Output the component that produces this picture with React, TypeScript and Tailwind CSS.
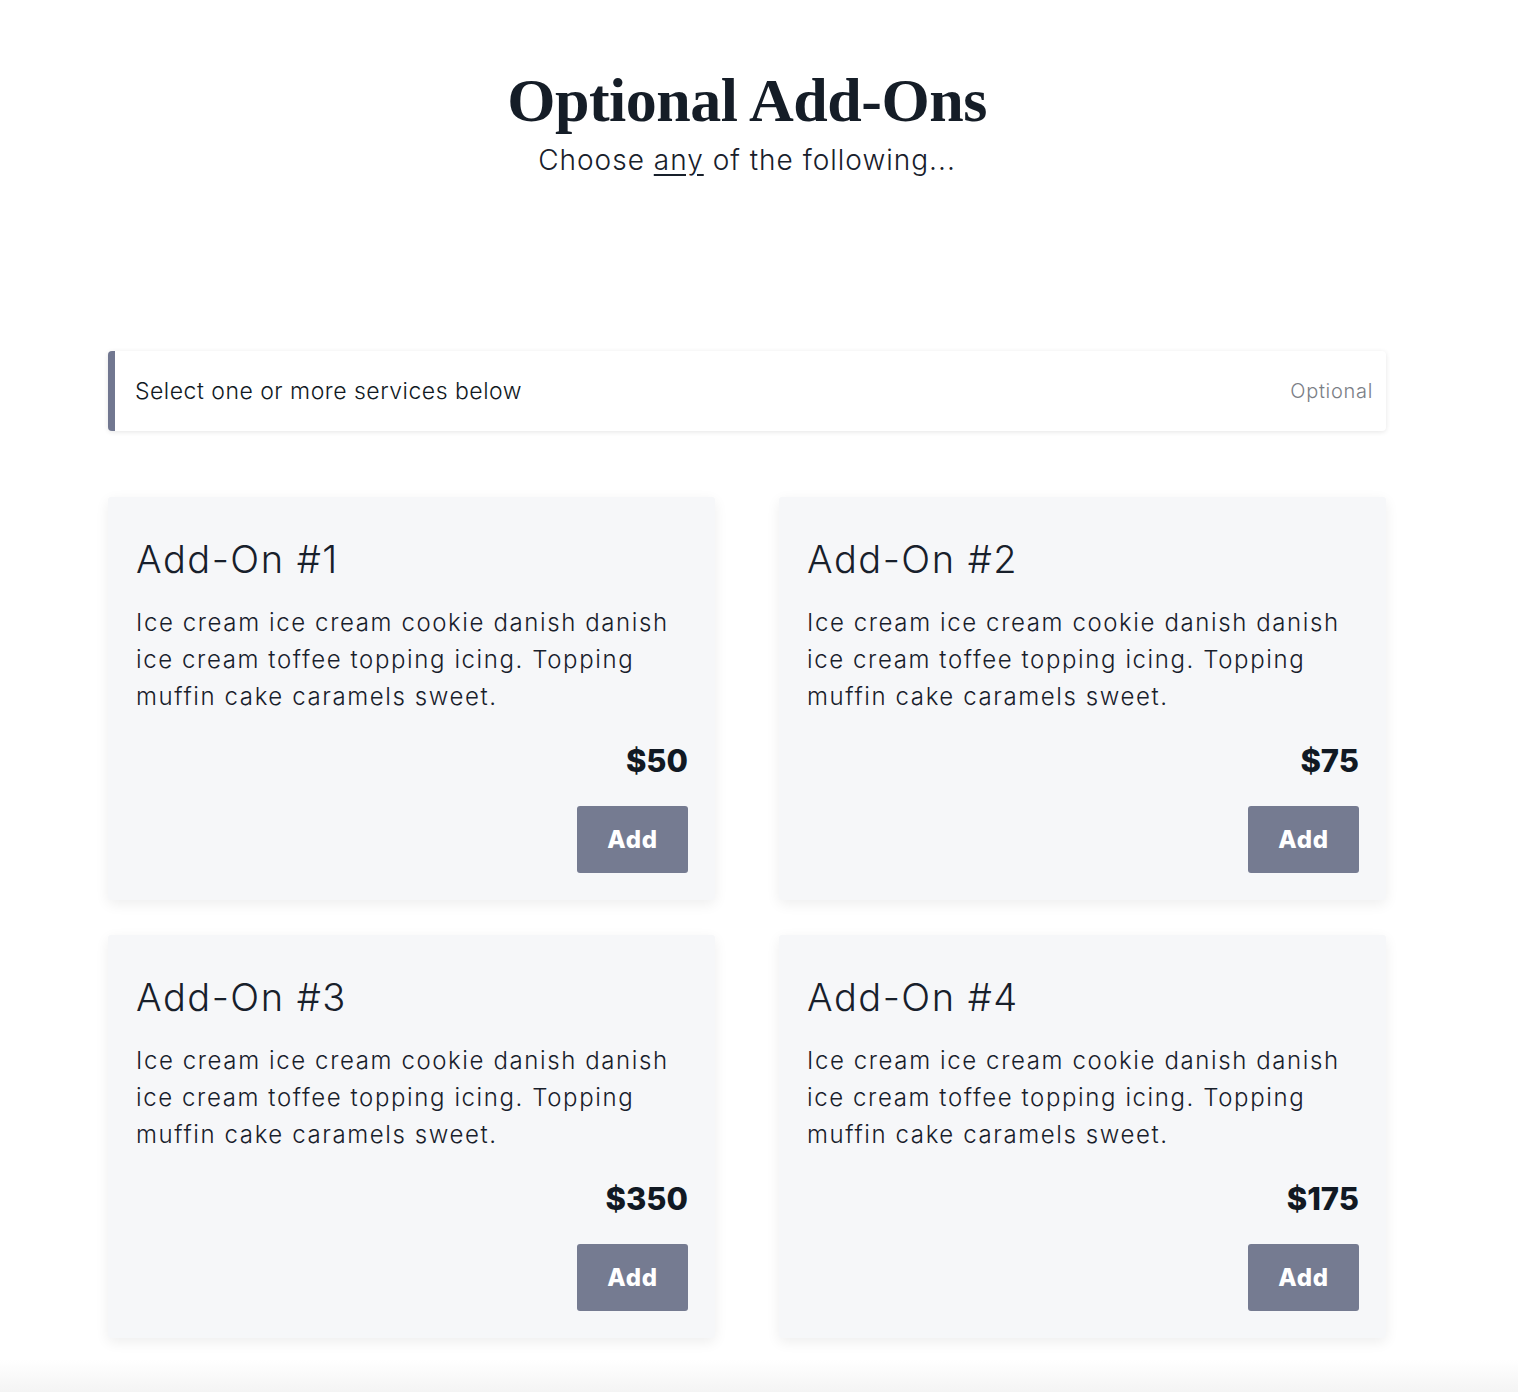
import React from 'react';

interface AddOn {
  id: number;
  price: string;
}

const addOns: AddOn[] = [
  { id: 1, price: '$50' },
  { id: 2, price: '$75' },
  { id: 3, price: '$350' },
  { id: 4, price: '$175' },
];

const blurb =
  'Ice cream ice cream cookie danish danish ice cream toffee topping icing. Topping muffin cake caramels sweet.';

const AddOnCard: React.FC<{ item: AddOn }> = ({ item }) => (
  <div className="flex flex-col rounded-[3px] bg-[#f6f7f9] pl-[28px] pr-[27px] pt-[38px] pb-[27px] shadow-[0_4px_14px_rgba(0,0,0,0.07)]">
    <h3 className="text-[38px] font-light leading-[48px] tracking-[1.5px] text-[#18202b]">Add-On #{item.id}</h3>
    <p className="mt-[21px] text-[24px] font-light leading-[37px] tracking-[1.6px] text-[#18202b]">{blurb}</p>
    <div className="mt-[24px] text-right text-[31px] font-extrabold leading-[44px] text-[#111923]">{item.price}</div>
    <div className="mt-[23px] flex justify-end">
      <button className="h-[67px] w-[111px] rounded-[3px] bg-[#757b91] text-[24px] font-extrabold tracking-[0.8px] text-white">
        Add
      </button>
    </div>
  </div>
);

const App: React.FC = () => {
  return (
    <div className="min-h-[1392px] bg-white font-['Inter','Noto_Sans',sans-serif] text-[#18202b]">
      <div className="w-[1494px]">
        <header className="flex flex-col items-center pt-[62px]">
          <h1 className="font-['Liberation_Serif',serif] text-[62px] font-bold leading-[76px] tracking-[-0.5px] text-[#151d27]">
            Optional Add-Ons
          </h1>
          <p className="mt-[4px] text-[28px] font-light leading-[36px] tracking-[1px] text-[#18202b]">
            Choose <span className="underline underline-offset-4">any</span> of the following...
          </p>
        </header>

        <main className="mx-auto w-[1278px] pt-[173px] pb-[22px]">
          <div className="flex h-[80px] items-center justify-between rounded-[4px] border-l-[7px] border-[#717790] bg-white pl-[20px] pr-[13px] shadow-[0_1px_5px_rgba(0,0,0,0.1)]">
            <span className="text-[23px] font-light tracking-[0.5px] text-[#111923]">Select one or more services below</span>
            <span className="text-[20px] font-light tracking-[0.7px] text-[#7a7e86]">Optional</span>
          </div>

          <div className="mt-[66px] grid grid-cols-2 gap-x-[64px] gap-y-[35px]">
            {addOns.map((a) => (
              <AddOnCard key={a.id} item={a} />
            ))}
          </div>
        </main>
      </div>
      <div className="h-[32px] bg-gradient-to-b from-white to-[#f4f4f4]" />
    </div>
  );
};

export default App;
